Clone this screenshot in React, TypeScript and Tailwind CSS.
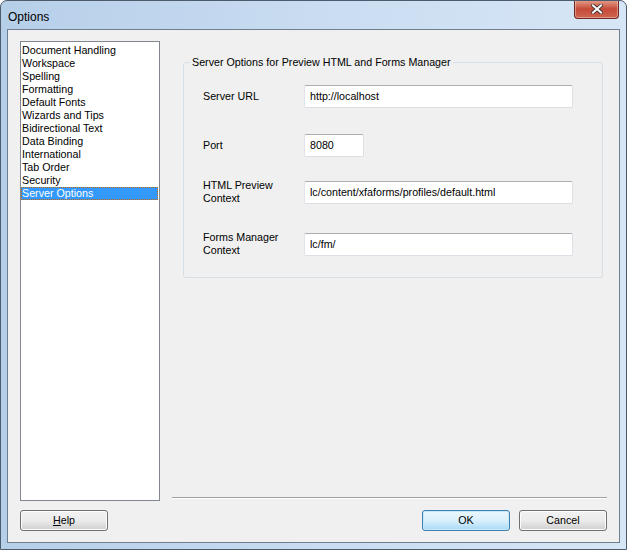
import React from "react";

const font = { fontFamily: '"Liberation Sans", Arial, sans-serif' };

const pages = [
  "Document Handling",
  "Workspace",
  "Spelling",
  "Formatting",
  "Default Fonts",
  "Wizards and Tips",
  "Bidirectional Text",
  "Data Binding",
  "International",
  "Tab Order",
  "Security",
  "Server Options",
];

function TextBox({ value, width }: { value: string; width: string }) {
  return (
    <div
      className={`${width} h-[23px] shrink-0 bg-white border border-[#dbdfe6] border-t-[#abadb3] border-l-[#e2e3ea] rounded-[2px] px-[5px] flex items-center text-[10.7px] text-black leading-none`}
    >
      {value}
    </div>
  );
}

function Field({ label, children }: { label: React.ReactNode; children: React.ReactNode }) {
  return (
    <div className="flex items-center">
      <div className="w-[101px] shrink-0 text-[10.7px] leading-[13px] text-black">{label}</div>
      {children}
    </div>
  );
}

function Button({ children, primary }: { children: React.ReactNode; primary?: boolean }) {
  return (
    <button
      className={
        primary
          ? "w-[88px] h-[21px] rounded-[3px] border border-[#3c7fb1] bg-gradient-to-b from-[#eaf6fd] via-[#d9f0fc] to-[#a7d9f5] text-[10.7px] text-black shadow-[inset_0_0_0_1px_#c9e9fb]"
          : "w-[88px] h-[21px] rounded-[3px] border border-[#707070] bg-gradient-to-b from-[#f2f2f2] via-[#ebebeb] to-[#cfcfcf] text-[10.7px] text-black shadow-[inset_0_0_0_1px_#fcfcfc]"
      }
    >
      {children}
    </button>
  );
}

export default function App() {
  return (
    <div
      className="w-[627px] h-[550px] flex flex-col rounded-t-[7px] border border-[#4d5c6d] bg-gradient-to-r from-[#b6cfe9] via-[#c9dcf1] to-[#d7e6f6] overflow-hidden"
      style={font}
    >
      {/* title bar */}
      <div className="h-[28px] shrink-0 flex items-start justify-between pl-[7px] pr-[7px]">
        <div className="pt-[7px] text-[12px] text-black">Options</div>
        <div className="w-[45px] h-[19px] -mt-px rounded-b-[4px] border border-t-0 border-[#6d2a22] bg-gradient-to-b from-[#e3a08f] via-[#c54a37] to-[#cf6450] flex items-center justify-center shadow-[inset_0_0_0_1px_rgba(255,220,210,0.45)]">
          <svg width="12" height="10" viewBox="0 0 12 10">
            <path d="M2 1.5 L10 8.5 M10 1.5 L2 8.5" stroke="#3f3333" strokeWidth="3.8" strokeLinecap="square" />
            <path d="M2 1.5 L10 8.5 M10 1.5 L2 8.5" stroke="#ffffff" strokeWidth="2" strokeLinecap="square" />
          </svg>
        </div>
      </div>

      {/* client area */}
      <div className="flex-1 mx-[6px] mb-[6px] border border-[#6f7f90] bg-[#f0f0f0] flex flex-col pl-[12px] pr-[12px] pt-[11px]">
        <div className="flex">
          <div className="w-[140px] h-[460px] shrink-0 bg-white border border-[#828790] pt-[2px] pr-px">
            {pages.map((p) =>
              p === "Server Options" ? (
                <div
                  key={p}
                  className="h-[13px] leading-[11px] text-[10.7px] text-white bg-[#3399ff] border border-dotted border-[#cc6600]"
                >
                  {p}
                </div>
              ) : (
                <div key={p} className="h-[13px] leading-[13px] text-[10.7px] text-black pl-px">
                  {p}
                </div>
              )
            )}
          </div>

          <div className="flex-1 ml-[12px] flex flex-col">
            <div className="relative mt-[21px] ml-[11px] w-[420px] border border-[#d5dfe5] rounded-[3px] pl-[19px] pt-[22px] pb-[20px]">
              <span className="absolute -top-[7px] left-[6px] px-[2px] bg-[#f0f0f0] text-[10.7px] leading-[13px] text-black">
                Server Options for Preview HTML and Forms Manager
              </span>
              <Field label="Server URL">
                <TextBox value="http://localhost" width="w-[269px]" />
              </Field>
              <div className="mt-[26px]">
                <Field label="Port">
                  <TextBox value="8080" width="w-[60px]" />
                </Field>
              </div>
              <div className="mt-[22px]">
                <Field
                  label={
                    <>
                      HTML Preview
                      <br />
                      Context
                    </>
                  }
                >
                  <TextBox value="lc/content/xfaforms/profiles/default.html" width="w-[269px]" />
                </Field>
              </div>
              <div className="mt-[26px]">
                <Field
                  label={
                    <>
                      Forms Manager
                      <br />
                      Context
                    </>
                  }
                >
                  <TextBox value="lc/fm/" width="w-[269px]" />
                </Field>
              </div>
            </div>
            <div className="mt-auto mb-[2px] h-px bg-[#a0a0a0] border-b border-white box-content" />
          </div>
        </div>

        <div className="mt-[9px] flex items-center">
          <Button>
            <span className="underline">H</span>elp
          </Button>
          <div className="ml-auto flex gap-[9px]">
            <Button primary>OK</Button>
            <Button>Cancel</Button>
          </div>
        </div>
      </div>
    </div>
  );
}
